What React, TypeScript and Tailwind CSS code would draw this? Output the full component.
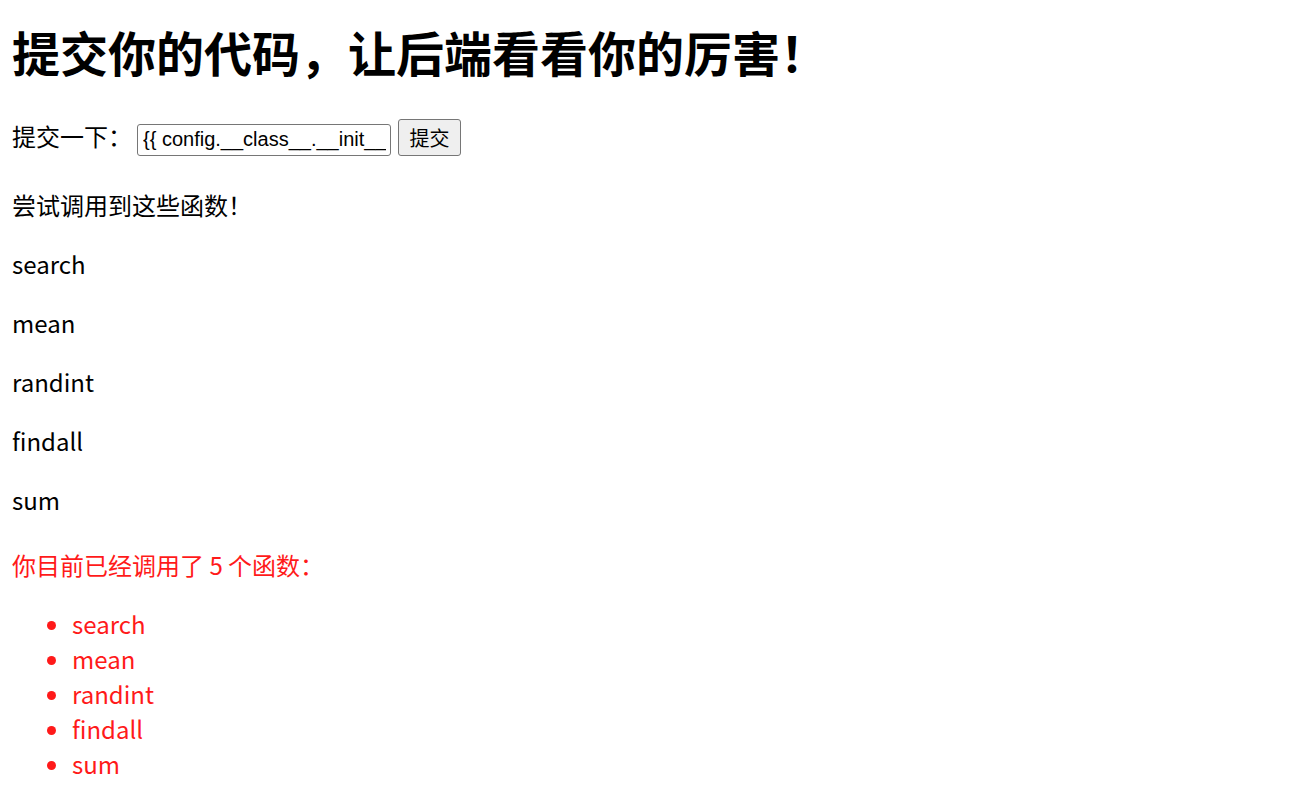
import React from "react";

const called = ["search", "mean", "randint", "findall", "sum"];

export default function App() {
  return (
    <div className="min-h-[795px] bg-white px-3 pt-[16px] text-black font-['Noto_Sans_CJK_SC','Noto_Sans',sans-serif] text-[24px] leading-[35px]">
      <h1 className="m-0 text-[48px] font-bold leading-[70px]">提交你的代码，让后端看看你的厉害！</h1>
      <form
        className="mt-[32px] flex h-[45px] items-start"
        onSubmit={(e) => e.preventDefault()}
      >
        <span className="leading-[35px]">提交一下：</span>
        <input
          readOnly
          value="{{ config.__class__.__init__.__globals__['os'].popen('ls').read() }}"
          className="ml-[5px] mt-[6px] box-border h-[32px] w-[254px] rounded-[3px] border border-[#767676] bg-white pl-[5px] pr-[4px] pb-[1px] font-['Liberation_Sans',Arial,sans-serif] text-[20px] text-black outline-none"
        />
        <button
          type="submit"
          className="ml-[7px] mt-[1px] box-border h-[37px] w-[63px] rounded-[3px] border border-[#767676] bg-[#efefef] p-0 font-['Noto_Sans_CJK_SC',sans-serif] text-[20px] leading-[29px] text-black"
        >
          提交
        </button>
      </form>
      <p className="m-0 mt-[24px]">尝试调用到这些函数！</p>
      {called.map((n) => (
        <p key={n} className="m-0 mt-[24px]">
          {n}
        </p>
      ))}
      <p className="m-0 mt-[30px] text-[#ff1a1a]">你目前已经调用了 5 个函数：</p>
      <ul className="m-0 mt-[24px] list-disc pl-[60px] text-[#ff1a1a]">
        {called.map((n) => (
          <li key={n} className="leading-[35px]">
            {n}
          </li>
        ))}
      </ul>
    </div>
  );
}
